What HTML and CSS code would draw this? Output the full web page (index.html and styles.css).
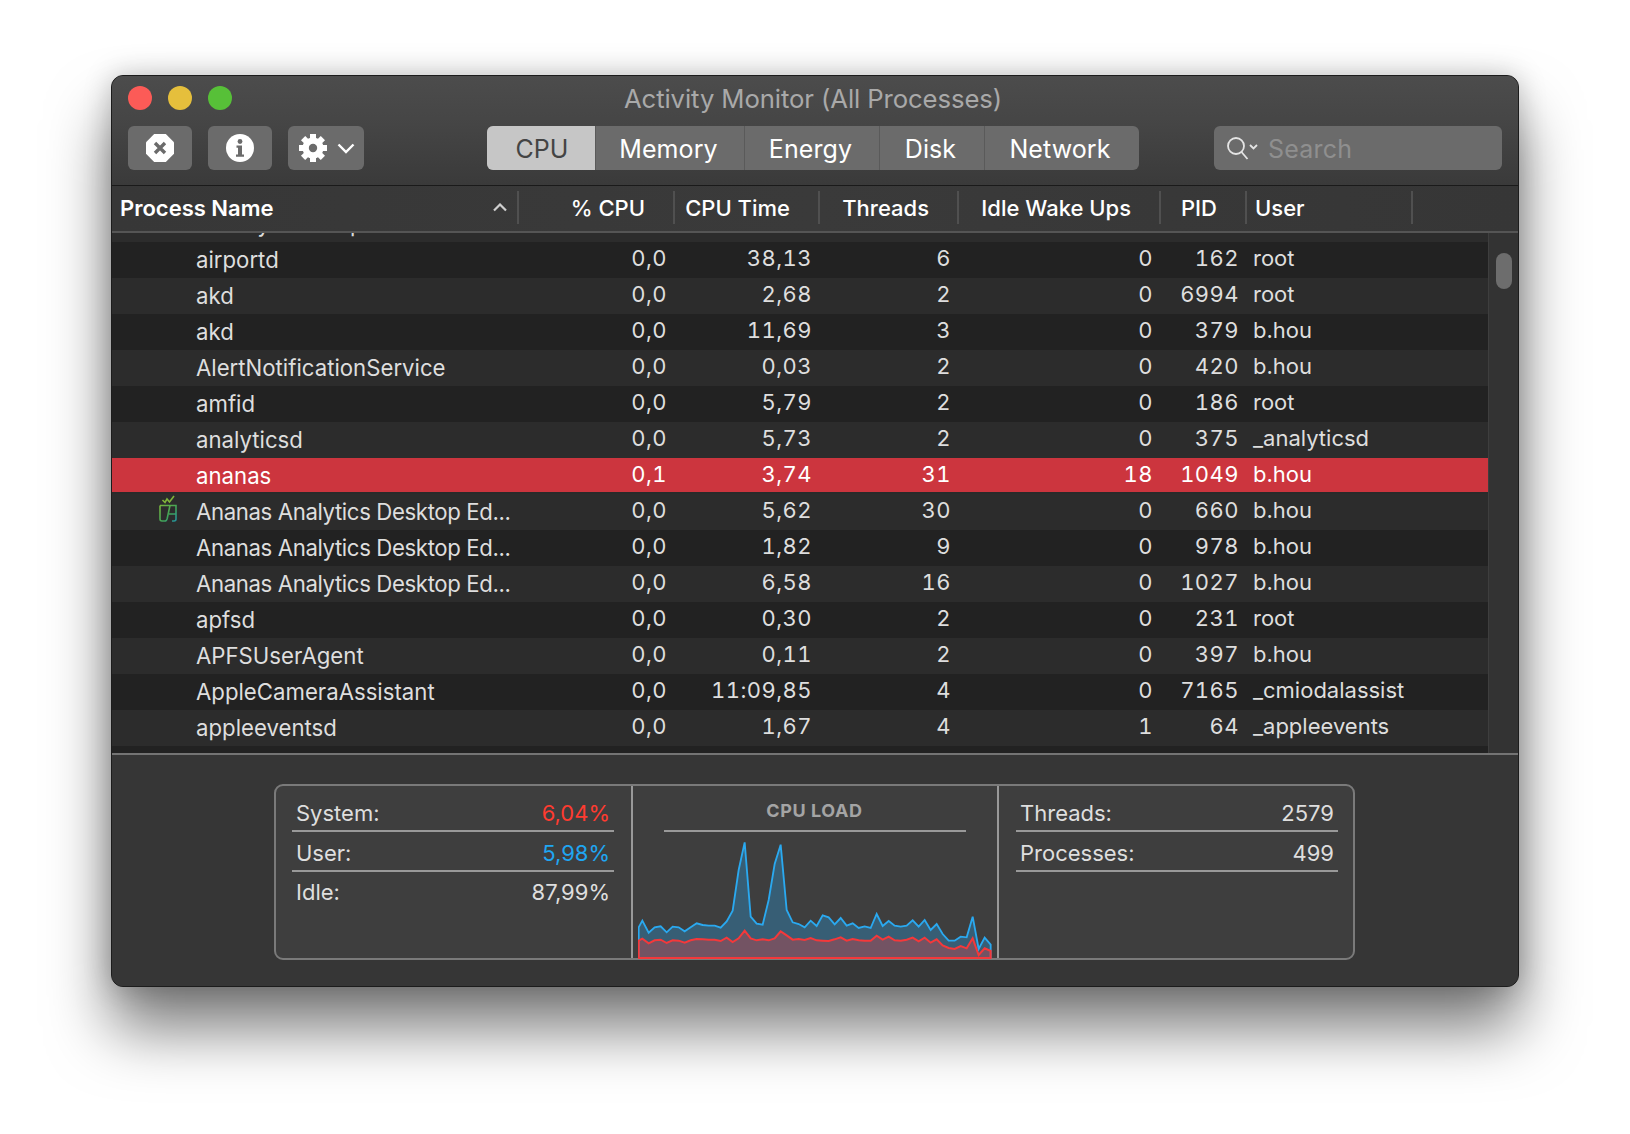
FILE: index.html
```html
<!DOCTYPE html>
<html lang="en">
<head>
<meta charset="utf-8">
<title>Activity Monitor (All Processes)</title>
<link rel="stylesheet" href="styles.css">
</head>
<body>
<main class="window">
  <header class="titlebar">
    <div class="lights"><span class="light red"></span><span class="light yellow"></span><span class="light green"></span></div>
    <div class="title">Activity Monitor (All Processes)</div>
  </header>
  <div class="toolbar">
    <button class="tool">
      <svg width="28" height="28" viewBox="0 0 28 28"><path class="white" d="M8.2 0h11.6L28 8.2v11.6L19.8 28H8.2L0 19.8V8.2z"/><path class="cross" d="M9 9l10 10M19 9L9 19"/></svg>
    </button>
    <button class="tool">
      <svg width="28" height="28" viewBox="0 0 28 28"><circle class="white" cx="14" cy="14" r="14"/><circle class="gray" cx="14" cy="7.5" r="2.4"/><path class="gray" d="M10.5 11.5h5.5v9h2v2.2h-8v-2.2h2v-6.8h-1.5z"/></svg>
    </button>
    <button class="tool tool-gear">
      <svg width="28" height="28" viewBox="0 0 28 28"><circle class="white" cx="14" cy="14" r="10.500"/><g class="white"><rect x="11" y="0" width="6" height="28"/><rect x="11" y="0" width="6" height="28" transform="rotate(45 14 14)"/><rect x="11" y="0" width="6" height="28" transform="rotate(90 14 14)"/><rect x="11" y="0" width="6" height="28" transform="rotate(135 14 14)"/></g><circle class="gray" cx="14" cy="14" r="4.200"/></svg>
      <svg class="chev" width="18" height="11" viewBox="0 0 18 11"><path class="stroke-white" d="M1.500 1.500L9 9l7.500-7.500"/></svg>
    </button>
    <nav class="segments">
      <span class="seg seg-cpu active">CPU</span>
      <span class="seg seg-memory">Memory</span>
      <span class="seg seg-energy">Energy</span>
      <span class="seg seg-disk">Disk</span>
      <span class="seg seg-network">Network</span>
    </nav>
    <div class="search">
      <svg width="34" height="28" viewBox="0 0 34 28"><circle class="stroke-white thin" cx="11" cy="12" r="8"/><path class="stroke-white thin" d="M16.500 18l6 7"/><path class="stroke-white thin" d="M25 11l3.500 3.500L32 11"/></svg>
      <span class="search-text">Search</span>
    </div>
  </div>
  <div class="thead">
    <div class="th th-name">Process Name<svg class="sort" width="14" height="9" viewBox="0 0 14 9"><path d="M1 7.500l6-6 6 6"/></svg></div>
    <div class="th">% CPU</div>
    <div class="th">CPU Time</div>
    <div class="th">Threads</div>
    <div class="th">Idle Wake Ups</div>
    <div class="th">PID</div>
    <div class="th th-user">User</div>
    <div class="th-rest"></div>
  </div>
  <div class="list-wrap">
    <div class="list">
      <div class="rows">
        <div class="row"><span class="name">AirPlayXPCHelper</span></div>
        <div class="row"><span class="name">airportd</span><span class="num">0,0</span><span class="num">38,13</span><span class="num">6</span><span class="num">0</span><span class="num">162</span><span class="user">root</span></div>
        <div class="row"><span class="name">akd</span><span class="num">0,0</span><span class="num">2,68</span><span class="num">2</span><span class="num">0</span><span class="num">6994</span><span class="user">root</span></div>
        <div class="row"><span class="name">akd</span><span class="num">0,0</span><span class="num">11,69</span><span class="num">3</span><span class="num">0</span><span class="num">379</span><span class="user">b.hou</span></div>
        <div class="row"><span class="name">AlertNotificationService</span><span class="num">0,0</span><span class="num">0,03</span><span class="num">2</span><span class="num">0</span><span class="num">420</span><span class="user">b.hou</span></div>
        <div class="row"><span class="name">amfid</span><span class="num">0,0</span><span class="num">5,79</span><span class="num">2</span><span class="num">0</span><span class="num">186</span><span class="user">root</span></div>
        <div class="row"><span class="name">analyticsd</span><span class="num">0,0</span><span class="num">5,73</span><span class="num">2</span><span class="num">0</span><span class="num">375</span><span class="user">_analyticsd</span></div>
        <div class="row selected"><span class="name">ananas</span><span class="num">0,1</span><span class="num">3,74</span><span class="num">31</span><span class="num">18</span><span class="num">1049</span><span class="user">b.hou</span></div>
        <div class="row"><span class="name trunc"><svg class="app-icon" width="18" height="28" viewBox="0 0 18 28"><defs><linearGradient id="ag" gradientUnits="userSpaceOnUse" x1="0" y1="9" x2="18" y2="27"><stop offset="0" stop-color="#7db53a"/><stop offset=".6" stop-color="#3fa35a"/><stop offset="1" stop-color="#1f8fa8"/></linearGradient></defs><path class="crown" d="M3.500 5l2.500 2.500L8 4l2.500 3L15 1"/><path class="app-line" d="M1 10.500h16V24a2 2 0 0 1-2 2h-2M1 10.500V24a2 2 0 0 0 2 2h3c1.200 0 1.700-.6 2.200-2.500L11 10.500M10 19h7"/></svg>Ananas Analytics Desktop Ed...</span><span class="num">0,0</span><span class="num">5,62</span><span class="num">30</span><span class="num">0</span><span class="num">660</span><span class="user">b.hou</span></div>
        <div class="row"><span class="name trunc">Ananas Analytics Desktop Ed...</span><span class="num">0,0</span><span class="num">1,82</span><span class="num">9</span><span class="num">0</span><span class="num">978</span><span class="user">b.hou</span></div>
        <div class="row"><span class="name trunc">Ananas Analytics Desktop Ed...</span><span class="num">0,0</span><span class="num">6,58</span><span class="num">16</span><span class="num">0</span><span class="num">1027</span><span class="user">b.hou</span></div>
        <div class="row"><span class="name">apfsd</span><span class="num">0,0</span><span class="num">0,30</span><span class="num">2</span><span class="num">0</span><span class="num">231</span><span class="user">root</span></div>
        <div class="row"><span class="name">APFSUserAgent</span><span class="num">0,0</span><span class="num">0,11</span><span class="num">2</span><span class="num">0</span><span class="num">397</span><span class="user">b.hou</span></div>
        <div class="row"><span class="name">AppleCameraAssistant</span><span class="num">0,0</span><span class="num">11:09,85</span><span class="num">4</span><span class="num">0</span><span class="num">7165</span><span class="user">_cmiodalassist</span></div>
        <div class="row"><span class="name">appleeventsd</span><span class="num">0,0</span><span class="num">1,67</span><span class="num">4</span><span class="num">1</span><span class="num">64</span><span class="user">_appleevents</span></div>
        <div class="row"><span class="name"></span><span class="num">0,0</span><span class="num">33,04</span><span class="num">3</span><span class="num">0</span><span class="num">10300</span><span class="user">b.hou</span></div>
      </div>
    </div>
    <div class="scroll-col"><div class="thumb"></div></div>
  </div>
  <section class="bottom">
    <div class="summary">
      <div class="cell cell-left">
        <div class="stat"><span>System:</span><span class="red-text">6,04%</span></div>
        <div class="stat"><span>User:</span><span class="blue-text">5,98%</span></div>
        <div class="stat plain"><span>Idle:</span><span>87,99%</span></div>
      </div>
      <div class="cell cell-mid">
        <div class="load-title">CPU LOAD</div>
        <svg class="chart" width="354" height="120" viewBox="55 205 1062 360" preserveAspectRatio="none">
          <polygon class="blue-area" points="57,470 68,450 87,486 105,470 123,467 141,485 159,468 177,470 195,482 213,470 231,458 249,463 267,465 285,465 303,471 321,452 339,420 357,298 375,215 393,438 411,459 429,462 447,388 465,280 483,222 501,418 519,455 537,460 555,470 573,450 591,466 609,434 627,440 645,461 663,442 681,465 699,458 717,472 735,467 753,472 771,430 789,466 807,451 825,465 843,468 861,465 879,449 897,468 915,448 933,478 951,460 969,490 987,510 1005,510 1023,498 1041,500 1059,438 1077,535 1095,501 1113,522 1113,562 57,562"/>
          <polygon class="red-area" points="57,510 68,504 87,518 105,509 123,507 141,517 159,509 177,510 195,516 213,509 231,505 249,506 267,507 285,507 303,511 321,501 339,514 357,503 375,480 393,503 411,509 429,506 447,509 465,503 483,482 501,494 519,507 537,505 555,508 573,502 591,509 609,510 627,511 645,506 663,500 681,510 699,505 717,509 735,510 753,510 771,495 789,507 807,498 825,509 843,510 861,507 879,501 897,512 915,501 933,516 951,506 969,524 987,532 1005,535 1023,526 1041,533 1059,503 1077,553 1095,533 1113,541 1113,562 57,562"/>
        </svg>
      </div>
      <div class="cell cell-right">
        <div class="stat"><span>Threads:</span><span>2579</span></div>
        <div class="stat"><span>Processes:</span><span>499</span></div>
      </div>
    </div>
  </section>
</main>
</body>
</html>
```
FILE: styles.css
```css
* { box-sizing: border-box; }
html, body { margin: 0; height: 100%; }
body {
  background: #fff;
  padding: 75px 0 0 111px;
  font-family: Inter, "Liberation Sans", sans-serif;
  overflow: hidden;
}
.window {
  width: 1408px;
  height: 912px;
  display: flex;
  flex-direction: column;
  border: 1px solid #1c1c1c;
  border-radius: 12px;
  overflow: hidden;
  background: #363636;
  box-shadow: 0 42px 62px rgba(0, 0, 0, .52), 0 0 28px rgba(0, 0, 0, .22);
}
.titlebar {
  height: 49px;
  flex: none;
  display: grid;
  grid-template-columns: 1fr auto 1fr;
  align-items: center;
  padding: 0 20px 6px 16px;
  background: linear-gradient(#4c4c4c, #454545);
}
.lights { display: flex; gap: 16px; }
.light { width: 24px; height: 24px; border-radius: 50%; }
.red { background: #fc5b57; }
.yellow { background: #e5bf3c; }
.green { background: #57c038; }
.title { grid-column: 2; color: #a9a9a9; font-size: 25.700px; letter-spacing: -.1px; padding-top: 2px; }
.toolbar {
  height: 61px;
  flex: none;
  display: flex;
  padding: 1px 16px 0;
  gap: 16px;
  background: linear-gradient(#454545, #3a3a3a);
  border-bottom: 1px solid #1a1a1a;
}
.tool {
  width: 64px;
  height: 44px;
  border: 0;
  padding: 0;
  border-radius: 6px;
  background: #6b6b6b;
  display: flex;
  align-items: center;
  justify-content: center;
}
.tool-gear { width: 76px; gap: 10px; padding-left: 2px; }
.white { fill: #fff; }
.gray { fill: #6b6b6b; }
.cross { stroke: #6b6b6b; stroke-width: 3.400; fill: none; }
.stroke-white { stroke: #fff; stroke-width: 2.400; fill: none; }
.stroke-white.thin { stroke: #e4e4e4; stroke-width: 1.800; }
.segments {
  margin-left: 107px;
  width: 652px;
  height: 44px;
  display: flex;
  border-radius: 6px;
  overflow: hidden;
  background: #6b6b6b;
}
.seg {
  display: flex;
  align-items: center;
  justify-content: center;
  color: #fff;
  font-size: 25px;
  letter-spacing: .1px;
  padding: 2px 3px 0 0;
  border-right: 1px solid #5a5a5a;
}
.seg-cpu { width: 109px; padding: 2px 0 0 2px; }
.seg-memory { width: 149px; }
.seg-energy { width: 135px; }
.seg-disk { width: 105px; }
.seg-network { flex: 1; border-right: 0; padding-right: 4px; }
.seg.active { background: #c6c6c6; color: #444; }
.search {
  margin-left: auto;
  width: 288px;
  height: 44px;
  border-radius: 6px;
  background: #6b6b6b;
  display: flex;
  align-items: center;
  gap: 9px;
  padding-left: 11px;
  color: #8f8f8f;
  font-size: 25px;
}
.search-text { letter-spacing: .2px; padding-top: 2px; }
.thead {
  height: 47px;
  flex: none;
  display: grid;
  grid-template-columns: 407px 156px 145px 139px 202px 86px 166px 1fr;
  padding: 5px 0 7px;
  background: linear-gradient(90deg, #373737, #3a3a3a 50%, #363636);
  border-bottom: 2px solid #555;
}
.th {
  display: flex;
  align-items: center;
  justify-content: flex-end;
  padding-right: 28px;
  color: #fff;
  font-size: 22px;
  font-weight: 500;
  border-right: 2px solid #505050;
  white-space: nowrap;
}
.th-name { justify-content: space-between; padding: 0 10px 0 8px; font-weight: 600; }
.th-user { justify-content: flex-start; padding: 0 0 0 8px; }
.sort { fill: none; stroke: #cfcfcf; stroke-width: 2.200; }
.list-wrap { height: 520px; flex: none; display: flex; }
.list { flex: 1; overflow: hidden; background: #222; }
.rows { margin-top: -27px; }
.row {
  height: 36px;
  display: grid;
  grid-template-columns: 405px 156px 145px 139px 202px 86px 1fr;
  align-items: center;
  color: #dedede;
  font-size: 22px;
  background: #222;
  white-space: nowrap;
}
.row:nth-child(odd) { background: #2c2c2c; }
.row.selected {
  background: #cc353e;
  color: #fff;
  box-shadow: inset 0 -2px 0 #2a2a2a;
}
.name { position: relative; padding: 0 0 2px 84px; font-size: 22.200px; }
.trunc { letter-spacing: -.38px; }
.num {
  text-align: right;
  padding: 0 6px 5px 0;
  letter-spacing: .45px;
  font-variant-numeric: tabular-nums;
}
.user { padding: 0 0 5px 8px; }
.app-icon { position: absolute; left: 47px; top: -3px; fill: none; }
.crown { stroke: #7fb43a; stroke-width: 1.600; fill: none; }
.app-line { stroke: url(#ag); stroke-width: 1.600; fill: none; }
.scroll-col {
  width: 30px;
  flex: none;
  background: #333;
  border-left: 1px solid #3e3e3e;
  padding: 20px 0 0 7px;
}
.thumb { width: 16px; height: 36px; border-radius: 8px; background: #6d6d6d; }
.bottom {
  flex: 1;
  border-top: 2px solid #747474;
  background: #363636;
  padding: 29px 0 0 162px;
}
.summary {
  width: 1081px;
  height: 176px;
  display: flex;
  background: #3e3e3e;
  border: 2px solid #7a7a7a;
  border-radius: 9px;
}
.cell { padding-top: 6px; }
.cell-left { width: 355px; padding: 6px 17px 0 16px; }
.cell-mid { width: 368px; border-left: 2px solid #999; border-right: 2px solid #999; padding: 0 5px 0 4px; display: flex; flex-direction: column; align-items: center; }
.cell-right { flex: 1; padding: 6px 15px 0 17px; }
.stat {
  height: 40px;
  display: flex;
  justify-content: space-between;
  align-items: center;
  padding: 3px 4px 0;
  color: #dedede;
  font-size: 22px;
  border-bottom: 2px solid #999;
}
.stat.plain { border-bottom: 0; padding-top: 0; }
.red-text { color: #ff3b30; }
.blue-text { color: #1fa6f2; }
.load-title {
  width: 302px;
  height: 46px;
  flex: none;
  padding-top: 4px;
  display: flex;
  align-items: center;
  justify-content: center;
  color: #a4a4a4;
  font-size: 18px;
  font-weight: 700;
  letter-spacing: .6px;
  border-bottom: 2px solid #999;
}
.chart { display: block; margin-top: auto; margin-bottom: -1px; }
.blue-area { fill: rgba(41, 170, 245, .3); stroke: #2aa9f0; stroke-width: 5.500; }
.red-area { fill: rgba(255, 60, 60, .3); stroke: #f5383a; stroke-width: 6; }
```
